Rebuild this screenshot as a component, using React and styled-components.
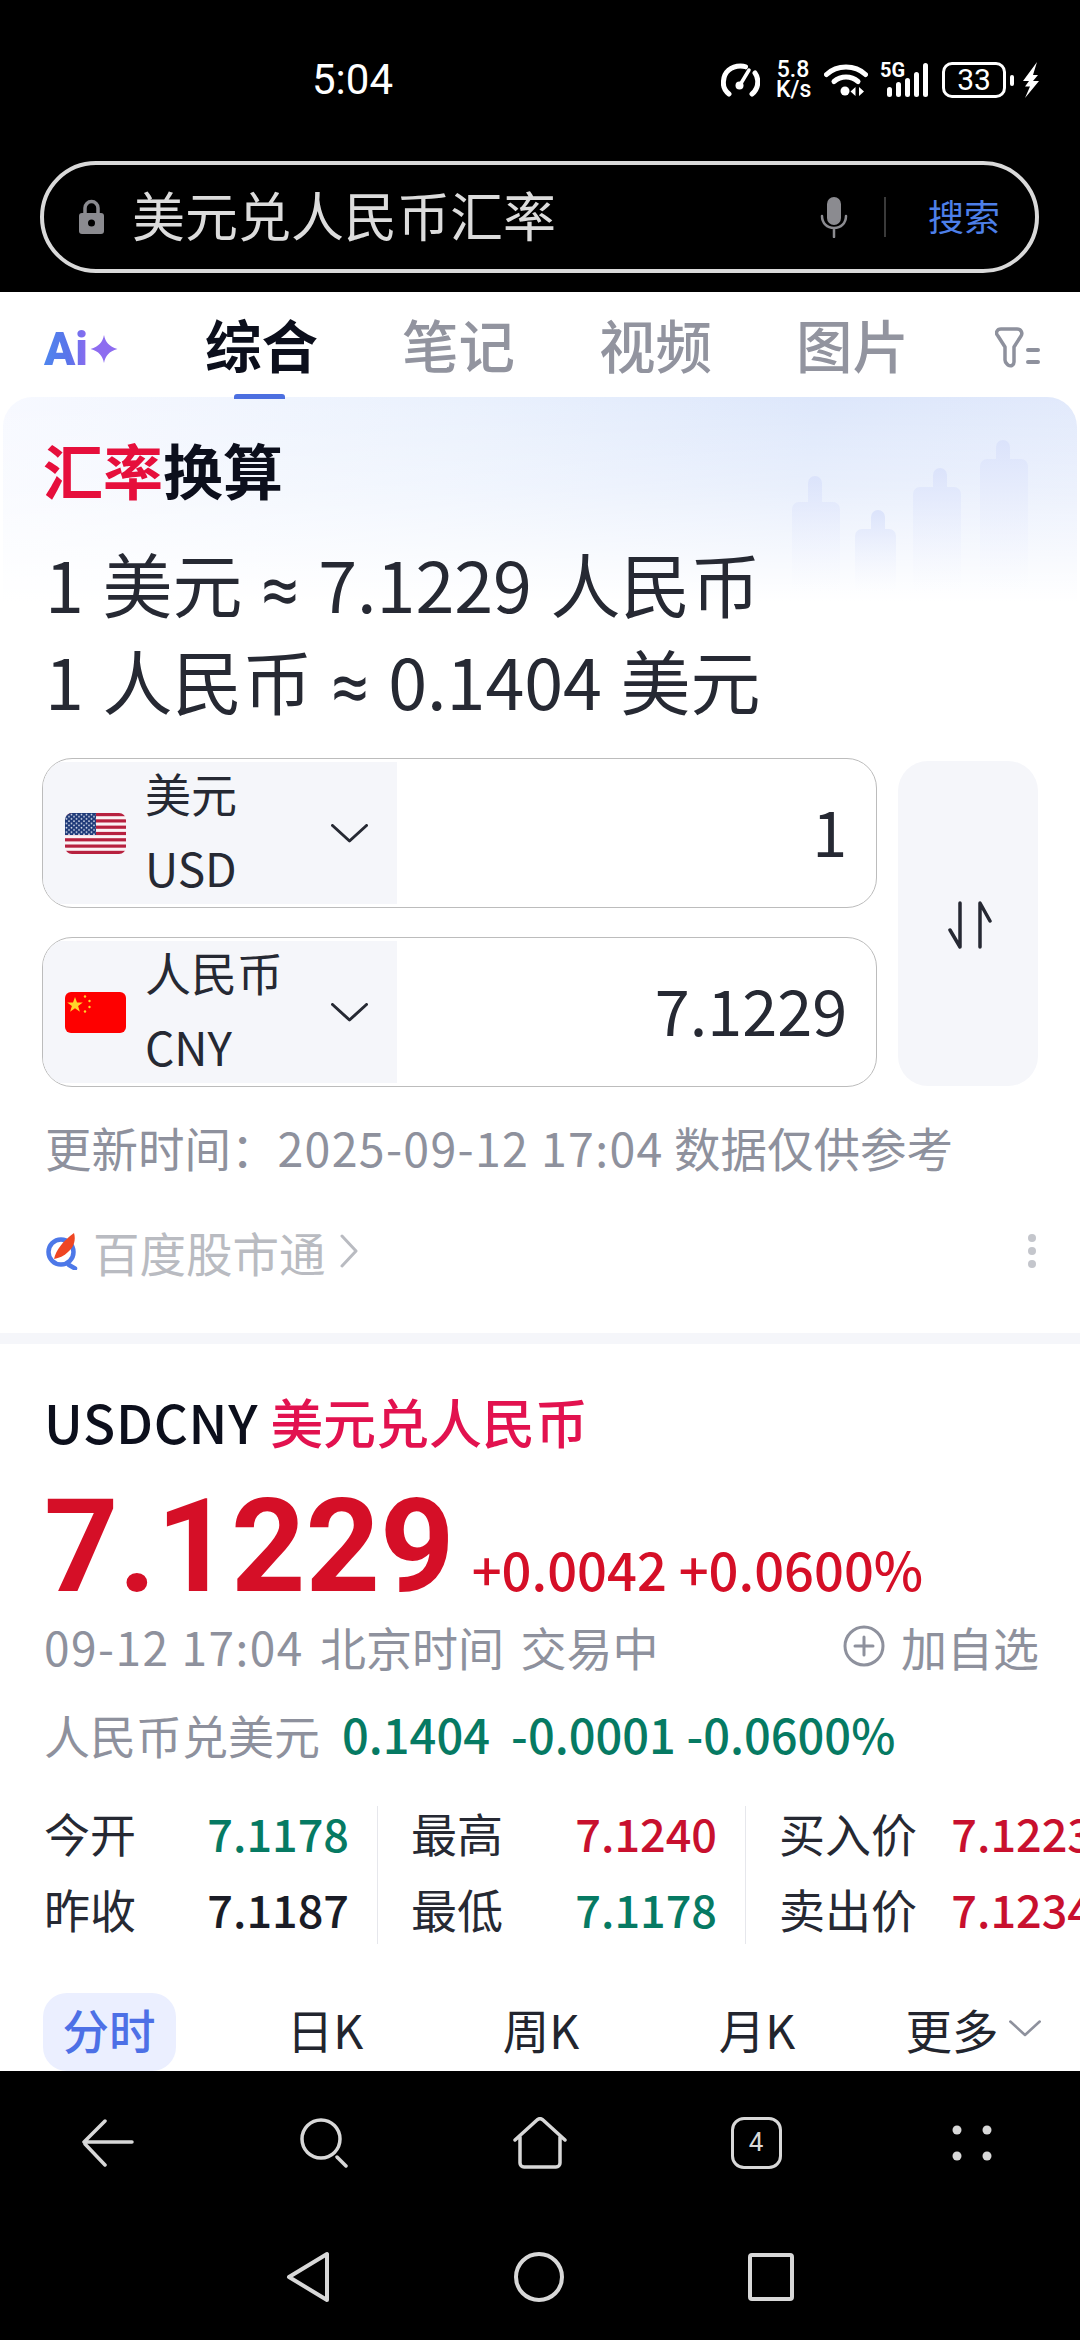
import React from "react"
import styled, { createGlobalStyle } from "styled-components"

const CJK = `"Noto Sans CJK SC", "Noto Sans", sans-serif`

const GlobalStyle = createGlobalStyle`
  html, body {
    margin: 0;
    padding: 0;
    background: #000;
  }
  * {
    box-sizing: border-box;
  }
`

const Screen = styled.div`
  width: 1080px;
  height: 2340px;
  display: flex;
  flex-direction: column;
  overflow: hidden;
  background: #000;
  font-family: ${CJK};
`

/* status bar */
const StatusBar = styled.div`
  height: 160px;
  flex: none;
  display: flex;
  align-items: center;
  padding: 0 40px 0 312px;
  color: #fff;
`
const Clock = styled.div`
  font-family: Roboto, sans-serif;
  font-size: 42px;
  line-height: 48px;
`
const StatusIcons = styled.div`
  margin-left: auto;
  display: flex;
  align-items: center;
`
const Speed = styled.div`
  width: 34px;
  margin: 0 14px 0 16px;
  font-family: Roboto, sans-serif;
  font-weight: 500;
  font-size: 23px;
  line-height: 20px;
  text-align: center;
  white-space: nowrap;
`
const Signal = styled.div`
  position: relative;
  width: 50px;
  height: 34px;
  margin: 0 12px;
`
const FiveG = styled.span`
  position: absolute;
  left: 0;
  top: -3px;
  font-family: Roboto, sans-serif;
  font-weight: 700;
  font-size: 20px;
  line-height: 20px;
`
const Battery = styled.div`
  width: 64px;
  height: 36px;
  border: 3px solid #fff;
  border-radius: 10px;
  font-family: Roboto, sans-serif;
  font-size: 30px;
  line-height: 30px;
  text-align: center;
`
const BatteryNub = styled.div`
  width: 4px;
  height: 11px;
  margin: 0 8px 0 4px;
  background: #fff;
  border-radius: 2px;
`

/* search */
const SearchBar = styled.div`
  height: 132px;
  flex: none;
  padding: 1px 41px 0 40px;
`
const SearchBox = styled.div`
  height: 112px;
  display: flex;
  align-items: center;
  padding: 0 35px 0 34px;
  border: 4px solid #d9d9d9;
  border-radius: 56px;
`
const SearchText = styled.div`
  margin: 0 0 6px 27px;
  font-size: 53px;
  line-height: 60px;
  color: #dcdcdc;
`
const SearchDivider = styled.div`
  width: 2px;
  height: 40px;
  margin: 0 42px 0 36px;
  background: #3a3a3a;
`
const SearchAction = styled.div`
  margin-bottom: 5px;
  font-size: 36px;
  line-height: 44px;
  color: #4d7fe8;
`

/* page */
const Page = styled.div`
  flex: 1;
  min-height: 0;
  overflow: hidden;
  background: #fff;
`
const TabBar = styled.div`
  height: 105px;
  display: flex;
  align-items: center;
  gap: 84px;
  padding: 0 0 3px 44px;
`
const AiMark = styled.div`
  width: 77px;
  margin-top: 11px;
  display: flex;
  align-items: center;
  gap: 2px;
`
const AiText = styled.span`
  font-family: Roboto, sans-serif;
  font-weight: 900;
  font-size: 46px;
  line-height: 46px;
  background: linear-gradient(90deg, #4f86ee, #5a74ea 55%, #8d6cf0);
  -webkit-background-clip: text;
  background-clip: text;
  color: transparent;
`
const Tab = styled.div`
  position: relative;
  font-size: 56.5px;
  line-height: 64px;
  font-weight: ${(p) => (p.$active ? 700 : 500)};
  color: ${(p) => (p.$active ? "#0c0f1c" : "#92949f")};
  &::after {
    content: "";
    display: ${(p) => (p.$active ? "block" : "none")};
    position: absolute;
    left: 29px;
    bottom: -24px;
    width: 51px;
    height: 5px;
    background: #4c6fe0;
    border-radius: 3px 3px 0 0;
    z-index: 2;
  }
`
const FilterIcon = styled.svg`
  margin: 9px 0 0 2px;
  flex: none;
`

/* converter card */
const Card = styled.div`
  position: relative;
  margin: 0 3px;
  padding: 43px 39px 52px;
  border-radius: 30px 30px 0 0;
  background: linear-gradient(180deg, rgba(255, 255, 255, 0) 0, rgba(255, 255, 255, 0.35) 90px, #fff 205px),
    linear-gradient(105deg, #f7f9ff 0%, #eaf1fd 35%, #dde7fb 62%, #e6ecfc 100%);
`
const Candles = styled.svg`
  position: absolute;
  right: 49px;
  top: 43px;
`
const CardTitle = styled.div`
  position: relative;
  font-size: 60px;
  line-height: 58px;
  font-weight: 700;
  color: #0c0f1c;
  margin-left: 1px;
`
const TitleAccent = styled.span`
  color: #e60f3c;
`
const Rates = styled.div`
  position: relative;
  margin-top: 36px;
  font-size: 70px;
  line-height: 97px;
  word-spacing: 3px;
  color: #262933;
  padding-left: 3px;
`
const ApproxSign = styled.span`
  font-family: Roboto, sans-serif;
  font-size: 68px;
  line-height: 0;
`
const Converter = styled.div`
  position: relative;
  margin-top: 30px;
  display: flex;
  gap: 21px;
`
const Rows = styled.div`
  width: 836px;
  display: flex;
  flex-direction: column;
  gap: 29px;
`
const Row = styled.div`
  height: 150px;
  display: flex;
  overflow: hidden;
  border: 1.5px solid #bcbcbc;
  border-radius: 30px;
  background: #fff;
`
const CurrencyPicker = styled.div`
  width: 354px;
  display: flex;
  align-items: center;
  padding-left: 22px;
  margin: 3px 0;
  background: #f5f6fa;
`
const Flag = styled.svg`
  flex: none;
`
const CurrencyName = styled.div`
  width: 186px;
  margin-left: 19px;
  padding-bottom: 7px;
  font-size: 46px;
  line-height: 75px;
  color: #262933;
`
const AmountBox = styled.div`
  flex: 1;
  text-align: right;
  padding-right: 29px;
  font-size: 63px;
  line-height: 141px;
  color: #262933;
`
const SwapButton = styled.div`
  width: 140px;
  height: 325px;
  margin-top: 3px;
  display: flex;
  align-items: center;
  justify-content: center;
  padding: 2px 0 0 4px;
  background: #f5f6fa;
  border-radius: 30px;
`
const UpdateTime = styled.div`
  position: relative;
  margin-top: 30px;
  padding-left: 3px;
  font-size: 46.5px;
  line-height: 60px;
  color: #8e919d;
  white-space: nowrap;
`
const DateText = styled.span`
  letter-spacing: ${(p) => p.$spacing}px;
  word-spacing: 0;
`
const SourceRow = styled.div`
  margin-top: 44px;
  display: flex;
  align-items: center;
  padding-left: 3px;
  height: 60px;
  font-size: 46.5px;
  color: #b9bbc1;
`
const SourceName = styled.span`
  margin: 0 14px;
`
const MoreDots = styled.div`
  margin-left: auto;
  margin-right: 2px;
  display: flex;
  flex-direction: column;
  gap: 5px;
`
const MoreDot = styled.span`
  width: 8px;
  height: 8px;
  border-radius: 50%;
  background: #c4c6cc;
`
const SectionGap = styled.div`
  height: 11px;
  background: #f5f6fa;
`

/* quote */
const Quote = styled.div`
  padding: 47px 41px 0 44px;
`
const QuoteTitle = styled.div`
  font-size: 53px;
  line-height: 60px;
  font-weight: 500;
  color: #0c0f1c;
`
const QuoteCode = styled.span`
  letter-spacing: 0.7px;
`
const QuoteName = styled.span`
  color: #e2124f;
`
const PriceRow = styled.div`
  margin-top: 31px;
  height: 130px;
  display: flex;
  align-items: baseline;
  gap: 17px;
  color: #d50f27;
`
const Price = styled.div`
  font-family: Roboto, sans-serif;
  font-weight: 700;
  font-size: 130px;
  line-height: 130px;
`
const PriceChange = styled.div`
  font-size: 52.5px;
  line-height: 60px;
  font-weight: 500;
`
const MetaRow = styled.div`
  margin-top: 4px;
  display: flex;
  align-items: center;
  justify-content: space-between;
  height: 60px;
  font-size: 46px;
  color: #8e919d;
  word-spacing: 6px;
`
const Watch = styled.div`
  display: flex;
  align-items: center;
  gap: 16px;
`
const InverseRow = styled.div`
  margin-top: 28px;
  font-size: 46px;
  line-height: 60px;
  color: #8e919d;
  white-space: nowrap;
`
const InverseValue = styled.span`
  margin-left: 22px;
  font-size: 47px;
  color: #067a63;
  font-weight: 500;
`
const Stats = styled.div`
  margin-top: 30px;
  display: flex;
  width: 1100px;
`
const StatColumn = styled.div`
  position: relative;
  flex: none;
  width: ${(p) => p.$width}px;
  padding: 0 ${(p) => (p.$last ? 0 : 29)}px 0 ${(p) => (p.$first ? 0 : 33)}px;
  &::after {
    content: "";
    display: ${(p) => (p.$last ? "none" : "block")};
    position: absolute;
    right: 0;
    top: 12px;
    bottom: 2px;
    width: 1px;
    background: #e6e7ec;
  }
`
const StatRow = styled.div`
  display: flex;
  justify-content: space-between;
  height: 76px;
  align-items: center;
  font-size: 46px;
  color: #262933;
  white-space: nowrap;
`
const StatValue = styled.span`
  font-size: 45px;
  font-weight: 500;
  color: ${(p) => p.$color};
`
const Periods = styled.div`
  margin-top: 47px;
  display: grid;
  grid-template-columns: repeat(5, 216px);
  padding-left: 1px;
`
const Period = styled.div`
  height: 78px;
  width: ${(p) => (p.$active ? "133px" : "auto")};
  justify-self: center;
  display: flex;
  align-items: center;
  justify-content: center;
  gap: 10px;
  padding-bottom: 8px;
  font-size: 46.5px;
  color: ${(p) => (p.$active ? "#4d70e6" : "#22252e")};
  font-weight: ${(p) => (p.$active ? 500 : 400)};
  background: ${(p) => (p.$active ? "#ebefff" : "transparent")};
  border-radius: 24px;
`

/* navigation */
const Nav = styled.div`
  height: 269px;
  flex: none;
  background: #000;
`
const BrowserRow = styled.div`
  height: 144px;
  display: grid;
  grid-template-columns: repeat(5, 216px);
  place-items: center;
`
const SystemRow = styled.div`
  height: 124px;
  display: flex;
  align-items: center;
  justify-content: center;
  gap: 184px;
`
const TabCount = styled.div`
  width: 51px;
  height: 52px;
  border: 3.5px solid #d8d8d8;
  border-radius: 13px;
  font-family: Roboto, sans-serif;
  font-size: 26px;
  line-height: 45px;
  text-align: center;
  color: #d8d8d8;
`

const Chevron = ({ w = 37, h = 19, color = "#262933" }) => (
  <svg width={w} height={h} viewBox="0 0 37 19" fill="none">
    <path d="M1.5 1.5 18.5 17 35.5 1.5" stroke={color} strokeWidth="3" strokeLinecap="round" strokeLinejoin="round" />
  </svg>
)

const UsFlag = () => (
  <Flag width="61" height="41" viewBox="0 0 61 41">
    <defs>
      <clipPath id="usClip">
        <rect width="61" height="41" rx="7" />
      </clipPath>
      <pattern id="usStars" width="5" height="4.4" patternUnits="userSpaceOnUse">
        <circle cx="1.5" cy="1.5" r="0.9" fill="#d6dcec" />
        <circle cx="4" cy="3.7" r="0.9" fill="#d6dcec" />
      </pattern>
    </defs>
    <g clipPath="url(#usClip)">
      <rect width="61" height="41" fill="#fbf3f5" />
      {[0, 6.3, 12.6, 18.9, 25.2, 31.5, 37.8].map((y) => (
        <rect key={y} y={y} width="61" height="3.2" fill="#b7213f" />
      ))}
      <rect width="31" height="22" fill="#1f3a78" />
      <rect width="31" height="22" fill="url(#usStars)" />
    </g>
  </Flag>
)

const CnFlag = () => (
  <Flag width="61" height="41" viewBox="0 0 61 41">
    <rect width="61" height="41" rx="6" fill="#fe0000" />
    <path d="m10 5 2 5.6h5.8l-4.7 3.5 1.8 5.7L10 16.3l-4.9 3.5 1.8-5.7-4.7-3.5H8z" fill="#ffd32a" />
    <circle cx="20" cy="4.5" r="1.2" fill="#ffd32a" />
    <circle cx="24.5" cy="9" r="1.2" fill="#ffd32a" />
    <circle cx="24.5" cy="15" r="1.2" fill="#ffd32a" />
    <circle cx="20" cy="19.5" r="1.2" fill="#ffd32a" />
  </Flag>
)

const stats = [
  {
    width: 334,
    first: true,
    rows: [
      ["今开", "7.1178", "#067a63"],
      ["昨收", "7.1187", "#1a1c26"],
    ],
  },
  {
    width: 368,
    rows: [
      ["最高", "7.1240", "#c8102e"],
      ["最低", "7.1178", "#067a63"],
    ],
  },
  {
    width: 347,
    last: true,
    rows: [
      ["买入价", "7.1223", "#c8102e"],
      ["卖出价", "7.1234", "#c8102e"],
    ],
  },
]

export default function App() {
  return (
    <Screen>
      <GlobalStyle />
      <StatusBar>
        <Clock>5:04</Clock>
        <StatusIcons>
          <svg width="39" height="34" viewBox="0 0 39 34" fill="none" stroke="#fff" strokeLinecap="round">
            <path d="M8 31C3 27 2 22 2.500 18 3 9 10 3 19.500 3c2 0 3.500.2 5 .8" strokeWidth="5" />
            <path d="M31 31c5-4 6-9 5.700-13.500-.2-3-1.200-5.500-2.700-7.500" strokeWidth="5" />
            <path d="M19 22 28 7" strokeWidth="3.500" />
            <circle cx="18.500" cy="22.500" r="4" fill="#fff" stroke="none" />
          </svg>
          <Speed>
            5.8
            <br />
            K/s
          </Speed>
          <svg width="44" height="34" viewBox="0 0 44 34" fill="none" stroke="#fff" strokeLinecap="round">
            <path d="M2.500 11.500C13 1.500 31 1.500 41.500 11.500" strokeWidth="5" />
            <path d="M10 18.500c7-6 17-6 24 0" strokeWidth="5" />
            <circle cx="21" cy="28" r="4.500" fill="#fff" stroke="none" />
            <path d="M31.500 24v9l-5-4.500zM35 24v9l5-4.500z" fill="#fff" stroke="none" />
          </svg>
          <Signal>
            <FiveG>5G</FiveG>
            <svg width="50" height="34" viewBox="0 0 50 34" fill="#fff">
              <rect x="7" y="24" width="5" height="10" rx="2.500" />
              <rect x="16" y="19" width="5" height="15" rx="2.500" />
              <rect x="25" y="15" width="5" height="19" rx="2.500" />
              <rect x="34" y="9" width="5" height="25" rx="2.500" />
              <rect x="43" y="0" width="5" height="34" rx="2.500" />
            </svg>
          </Signal>
          <Battery>33</Battery>
          <BatteryNub />
          <svg width="18" height="36" viewBox="0 0 18 36" fill="#fff">
            <path d="M15 0 1 19h6l-4 5.500h5L3 36 17 19h-6l5-6h-5z" />
          </svg>
        </StatusIcons>
      </StatusBar>

      <SearchBar>
        <SearchBox>
          <svg width="27" height="36" viewBox="0 0 27 36" fill="#8b8b90">
            <path d="M7 15V9a6.500 6.500 0 0 1 13 0v6" fill="none" stroke="#8b8b90" strokeWidth="3.500" />
            <path d="M4 14h19a3 3 0 0 1 3 3v15a3 3 0 0 1-3 3H4a3 3 0 0 1-3-3V17a3 3 0 0 1 3-3z" />
            <circle cx="13.500" cy="24" r="3.500" fill="#000" />
          </svg>
          <SearchText>美元兑人民币汇率</SearchText>
          <svg width="28" height="42" viewBox="0 0 28 42" fill="none" style={{ marginLeft: "auto" }}>
            <rect x="7" y="1" width="14" height="28" rx="7" fill="#8b8b90" />
            <path d="M2 20c0 7 5 12 12 12s12-5 12-12M14 32v9" stroke="#8b8b90" strokeWidth="2.500" strokeLinecap="round" />
          </svg>
          <SearchDivider />
          <SearchAction>搜索</SearchAction>
        </SearchBox>
      </SearchBar>

      <Page>
        <TabBar>
          <AiMark>
            <AiText>Ai</AiText>
            <svg width="28" height="28" viewBox="0 0 25 26" fill="#8d6cf0">
              <path d="M12.500 0c1.500 7 4.500 10.500 12.500 13-8 2.500-11 6-12.500 13C11 19 8 15.500 0 13 8 10.500 11 7 12.500 0z" />
            </svg>
          </AiMark>
          <Tab $active>综合</Tab>
          <Tab>笔记</Tab>
          <Tab>视频</Tab>
          <Tab>图片</Tab>
          <FilterIcon width="46" height="42" viewBox="0 0 46 42" fill="none" stroke="#8e919d" strokeWidth="3.500" strokeLinejoin="round" strokeLinecap="round">
            <path d="M6 2h16c4 0 6 4 4 7l-7 11v15c0 3-3 5-6 3l-1-1c-1-1-2-2-2-4V20L3 9C0 6 2 2 6 2z" />
            <path d="M33 23h10M33 35h10" strokeWidth="4" />
          </FilterIcon>
        </TabBar>

        <Card>
          <Candles width="236" height="152" viewBox="0 0 236 152">
            <defs>
              <linearGradient id="candleFade" x1="0" y1="0" x2="0" y2="1">
                <stop offset="0" stopColor="#dbe3fb" />
                <stop offset="1" stopColor="#f5f7fe" stopOpacity="0" />
              </linearGradient>
            </defs>
            <g fill="url(#candleFade)">
              <path d="M16 43a7 7 0 0 1 14 0v19h11a7 7 0 0 1 7 7v83H0V69a7 7 0 0 1 7-7h9z" />
              <path d="M79 77a7 7 0 0 1 14 0v12h4a7 7 0 0 1 7 7v56H63V96a7 7 0 0 1 7-7h9z" />
              <path d="M141 35a7 7 0 0 1 14 0v12h7a7 7 0 0 1 7 7v98h-48V54a7 7 0 0 1 7-7h13z" />
              <path d="M204 7a7 7 0 0 1 14 0v12h11a7 7 0 0 1 7 7v126h-48V26a7 7 0 0 1 7-7h9z" />
            </g>
          </Candles>
          <CardTitle>
            <TitleAccent>汇率</TitleAccent>换算
          </CardTitle>
          <Rates>
            1 美元 <ApproxSign>≈</ApproxSign> 7.1229 人民币
            <br />1 人民币 <ApproxSign>≈</ApproxSign> 0.1404 美元
          </Rates>
          <Converter>
            <Rows>
              <Row>
                <CurrencyPicker>
                  <UsFlag />
                  <CurrencyName>
                    美元
                    <br />
                    USD
                  </CurrencyName>
                  <Chevron />
                </CurrencyPicker>
                <AmountBox>1</AmountBox>
              </Row>
              <Row>
                <CurrencyPicker>
                  <CnFlag />
                  <CurrencyName>
                    人民币
                    <br />
                    CNY
                  </CurrencyName>
                  <Chevron />
                </CurrencyPicker>
                <AmountBox>7.1229</AmountBox>
              </Row>
            </Rows>
            <SwapButton>
              <svg width="44" height="48" viewBox="0 0 44 48" fill="none" stroke="#262933" strokeWidth="3.500" strokeLinecap="round" strokeLinejoin="round">
                <path d="M12 2v44L2 29" />
                <path d="M32 46V2l10 18" />
              </svg>
            </SwapButton>
          </Converter>
          <UpdateTime>
            更新时间：<DateText $spacing={1.3}>2025-09-12 17:04</DateText> 数据仅供参考
          </UpdateTime>
          <SourceRow>
            <svg width="34" height="38" viewBox="0 0 34 38" fill="none">
              <circle cx="16" cy="20" r="12.500" stroke="#4d78e8" strokeWidth="4.500" />
              <path d="M24 33l6 3.500" stroke="#4d78e8" strokeWidth="4.500" strokeLinecap="round" />
              <path d="M9 27C11 18 18 9 29 1c2 7 0 14-6 19-4 4-9 6-14 7z" fill="#ef4623" />
            </svg>
            <SourceName>百度股市通</SourceName>
            <svg width="18" height="34" viewBox="0 0 18 34" fill="none">
              <path d="M2 2 16 17 2 32" stroke="#b9bbc1" strokeWidth="3" strokeLinecap="round" strokeLinejoin="round" />
            </svg>
            <MoreDots>
              <MoreDot />
              <MoreDot />
              <MoreDot />
            </MoreDots>
          </SourceRow>
        </Card>
        <SectionGap />

        <Quote>
          <QuoteTitle>
            <QuoteCode>USDCNY</QuoteCode> <QuoteName>美元兑人民币</QuoteName>
          </QuoteTitle>
          <PriceRow>
            <Price>7.1229</Price>
            <PriceChange>+0.0042 +0.0600%</PriceChange>
          </PriceRow>
          <MetaRow>
            <span>
              <DateText $spacing={1.5}>09-12 17:04</DateText> 北京时间 交易中
            </span>
            <Watch>
              <svg width="42" height="42" viewBox="0 0 42 42" fill="none" stroke="#8e919d" strokeWidth="3" strokeLinecap="round">
                <circle cx="21" cy="21" r="19" />
                <path d="M21 12v18M12 21h18" />
              </svg>
              加自选
            </Watch>
          </MetaRow>
          <InverseRow>
            人民币兑美元
            <InverseValue>0.1404 &nbsp;-0.0001 -0.0600%</InverseValue>
          </InverseRow>
          <Stats>
            {stats.map((col) => (
              <StatColumn key={col.width} $width={col.width} $first={col.first} $last={col.last}>
                {col.rows.map(([label, value, color]) => (
                  <StatRow key={label}>
                    {label}
                    <StatValue $color={color}>{value}</StatValue>
                  </StatRow>
                ))}
              </StatColumn>
            ))}
          </Stats>
        </Quote>
        <Periods>
          <Period $active>分时</Period>
          <Period>日K</Period>
          <Period>周K</Period>
          <Period>月K</Period>
          <Period>
            更多
            <Chevron w={32} h={17} color="#8e919d" />
          </Period>
        </Periods>
      </Page>

      <Nav>
        <BrowserRow>
          <svg width="52" height="48" viewBox="0 0 52 48" fill="none" stroke="#d8d8d8" strokeWidth="3.500" strokeLinecap="round" strokeLinejoin="round">
            <path d="M23 2 2 23h48M3 25l20 21" />
          </svg>
          <svg width="48" height="50" viewBox="0 0 48 50" fill="none" stroke="#d8d8d8" strokeWidth="3.500" strokeLinecap="round">
            <circle cx="21" cy="21" r="19" />
            <path d="M37 39l9 9" />
          </svg>
          <svg width="56" height="52" viewBox="0 0 56 52" fill="none" stroke="#d8d8d8" strokeWidth="3.500" strokeLinecap="round" strokeLinejoin="round">
            <path d="M3 23 25 3a4 4 0 0 1 6 0l22 20M8 20v26a4 4 0 0 0 4 4h32a4 4 0 0 0 4-4V20" />
          </svg>
          <TabCount>4</TabCount>
          <svg width="40" height="36" viewBox="0 0 40 36" fill="#d8d8d8">
            <circle cx="5" cy="5" r="4.500" />
            <circle cx="35" cy="5" r="4.500" />
            <circle cx="5" cy="31" r="4.500" />
            <circle cx="35" cy="31" r="4.500" />
          </svg>
        </BrowserRow>
        <SystemRow>
          <svg width="44" height="52" viewBox="0 0 44 52" fill="none" stroke="#d8d8d8" strokeWidth="4" strokeLinejoin="round">
            <path d="M41 3v46L3 26z" />
          </svg>
          <svg width="50" height="50" viewBox="0 0 50 50" fill="none" stroke="#d8d8d8" strokeWidth="4">
            <circle cx="25" cy="25" r="23" />
          </svg>
          <svg width="46" height="48" viewBox="0 0 46 48" fill="none" stroke="#d8d8d8" strokeWidth="4" strokeLinejoin="round">
            <rect x="2" y="2" width="42" height="44" rx="2" />
          </svg>
        </SystemRow>
      </Nav>
    </Screen>
  )
}
